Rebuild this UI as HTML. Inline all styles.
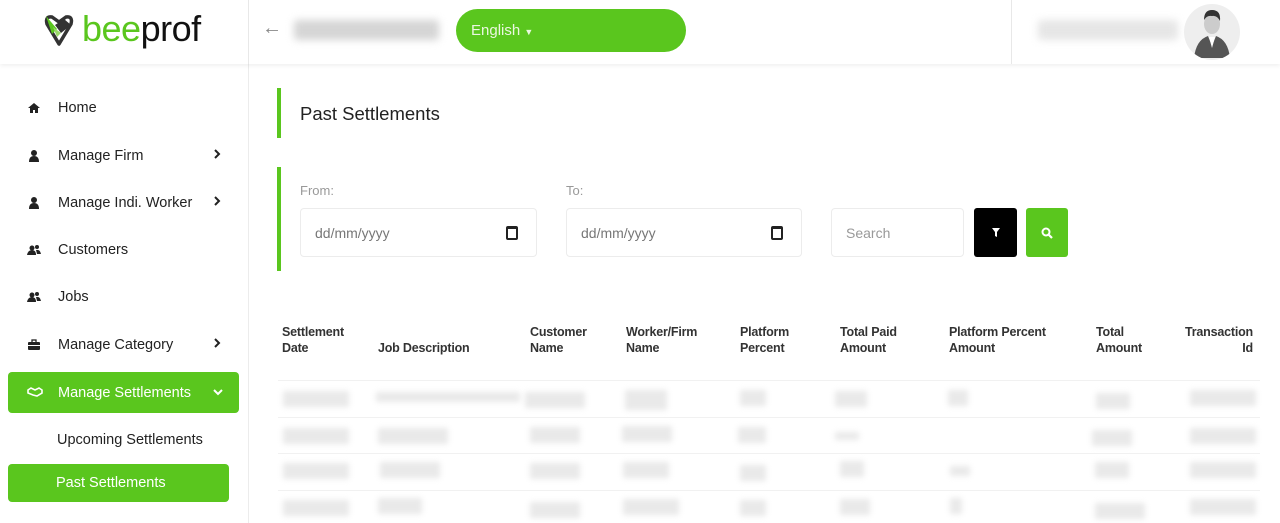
<!DOCTYPE html>
<html><head><meta charset="utf-8"><style>
*{box-sizing:border-box;margin:0;padding:0}
body{width:1280px;height:523px;overflow:hidden;background:#fff;font-family:"Liberation Sans",sans-serif;position:relative;color:#222}
.hdr{position:absolute;left:0;top:0;width:1280px;height:64px;background:#fff;box-shadow:0 2px 4px rgba(0,0,0,.06);z-index:2}
.vline{position:absolute;top:0;width:1px;background:#e8e8e8}
.blur{position:absolute;background:#e2e2e2;filter:blur(4px);border-radius:3px}
.side{position:absolute;left:0;top:64px;width:249px;height:459px;border-right:1px solid #ececec}
.nav{position:absolute;left:8px;width:231px;height:40px;font-size:14.5px;color:#222;display:flex;align-items:center}
.nav .ic{position:absolute;left:19px;top:13px;width:14px;height:14px}
.nav .tx{position:absolute;left:50px}
.nav .ar{position:absolute;left:205px;top:13px}
.act{background:#5ac61e;color:#fff;border-radius:4px}
.lbl{position:absolute;font-size:13px;color:#999}
.inp{position:absolute;top:208px;height:49px;border:1px solid #ececec;border-radius:4px;font-size:14px;color:#777;padding:0 14px;display:flex;align-items:center}
.th{position:absolute;top:324px;font-size:12.5px;font-weight:bold;color:#333;line-height:16px;letter-spacing:-.2px}
.rl{position:absolute;left:278px;width:982px;height:1px;background:#f1f1f1}
.b{position:absolute;height:16px;background:#e9e9e9;filter:blur(3px)}
</style></head><body>
<div class="hdr">
  <div style="position:absolute;left:42px;top:12px;width:34px;height:36px">
    <svg width="34" height="36" viewBox="0 0 34 36"><path d="M5 12 Q3 4 10 5 L17 10 L24 5 Q31 4 29 12 L17 32 Z" fill="none" stroke="#333" stroke-width="3.5" stroke-linejoin="round"/><path d="M4 4 L15 17 L10 22 Z" fill="#5ac61e"/><path d="M13 13 L22 7 L29 13 L19 21 Z" fill="#333"/><path d="M11 15 L19 21 L15 25 Z" fill="#9ad86a"/></svg>
  </div>
  <div style="position:absolute;left:82px;top:7px;font-size:36px;letter-spacing:-0.5px;line-height:44px"><span style="color:#5ac61e">bee</span><span style="color:#111">prof</span></div>
  <div class="vline" style="left:248px;height:64px"></div>
  <div style="position:absolute;left:262px;top:17px;font-size:20px;color:#888">←</div>
  <div class="blur" style="left:294px;top:20px;width:145px;height:20px;background:#d5d5d5"></div>
  <div style="position:absolute;left:456px;top:9px;width:230px;height:43px;background:#5ac61e;border-radius:22px;color:#eaf7e0;font-size:15px;padding-left:15px;line-height:43px">English <span style="font-size:9px">▼</span></div>
  <div class="vline" style="left:1011px;height:64px"></div>
  <div class="blur" style="left:1038px;top:20px;width:140px;height:20px;background:#e6e6e6"></div>
  <div style="position:absolute;left:1184px;top:4px;width:56px;height:56px;border-radius:50%;background:#eee;overflow:hidden">
    <svg width="56" height="56" viewBox="0 0 56 56"><ellipse cx="28" cy="20" rx="8" ry="10" fill="#ccc"/><path d="M20 16 Q20 6 28 6 Q37 6 36 17 Q33 11 28 12 Q23 11 20 16Z" fill="#333"/><path d="M10 54 Q12 36 24 32 L28 42 L32 32 Q44 36 46 54Z" fill="#555"/><path d="M25 33 L28 44 L31 33Z" fill="#fff"/></svg>
  </div>
</div>
<div class="side">
  <div class="nav" style="top:24px"><svg class="ic" viewBox="0 0 14 14"><path d="M1 7 L7 2 L13 7 L11 7 L11 12 L8 12 L8 9 L6 9 L6 12 L3 12 L3 7Z" fill="#222"/></svg><span class="tx">Home</span></div>
  <div class="nav" style="top:72px"><svg class="ic" viewBox="0 0 14 14"><circle cx="7" cy="4" r="3" fill="#222"/><path d="M2 13 Q2 7 7 7 Q12 7 12 13Z" fill="#222"/></svg><span class="tx">Manage Firm</span><svg class="ar" width="8" height="10" viewBox="0 0 8 10"><path d="M2 1 L6 5 L2 9" stroke="#222" stroke-width="2" fill="none"/></svg></div>
  <div class="nav" style="top:119px"><svg class="ic" viewBox="0 0 14 14"><circle cx="7" cy="4" r="3" fill="#222"/><path d="M2 13 Q2 7 7 7 Q12 7 12 13Z" fill="#222"/></svg><span class="tx">Manage Indi. Worker</span><svg class="ar" width="8" height="10" viewBox="0 0 8 10"><path d="M2 1 L6 5 L2 9" stroke="#222" stroke-width="2" fill="none"/></svg></div>
  <div class="nav" style="top:166px"><svg class="ic" viewBox="0 0 14 14"><circle cx="5" cy="5" r="2.5" fill="#222"/><path d="M0 12 Q1 7 5 7 Q9 7 9 12Z" fill="#222"/><circle cx="10" cy="4" r="2" fill="#222"/><path d="M9 7 Q13 6 14 11 L10 11Z" fill="#222"/></svg><span class="tx">Customers</span></div>
  <div class="nav" style="top:213px"><svg class="ic" viewBox="0 0 14 14"><circle cx="5" cy="5" r="2.5" fill="#222"/><path d="M0 12 Q1 7 5 7 Q9 7 9 12Z" fill="#222"/><circle cx="10" cy="4" r="2" fill="#222"/><path d="M9 7 Q13 6 14 11 L10 11Z" fill="#222"/></svg><span class="tx">Jobs</span></div>
  <div class="nav" style="top:261px"><svg class="ic" viewBox="0 0 14 14"><rect x="1" y="4" width="12" height="8" rx="1" fill="#222"/><rect x="5" y="2" width="4" height="3" fill="none" stroke="#222" stroke-width="1.3"/><rect x="1" y="7" width="12" height="1" fill="#fff"/></svg><span class="tx">Manage Category</span><svg class="ar" width="8" height="10" viewBox="0 0 8 10"><path d="M2 1 L6 5 L2 9" stroke="#222" stroke-width="2" fill="none"/></svg></div>
  <div class="nav act" style="top:308px;height:41px;color:#fff"><svg class="ic" viewBox="0 0 16 14" style="width:16px"><path d="M1 5 L4 3 L8 5 L12 3 L15 5 L15 8 L10 11 L6 10 L1 8Z" fill="none" stroke="#fff" stroke-width="1.6"/></svg><span class="tx">Manage Settlements</span><svg class="ar" width="10" height="8" viewBox="0 0 10 8" style="top:16px"><path d="M1 2 L5 6 L9 2" stroke="#fff" stroke-width="2" fill="none"/></svg></div>
  <div style="position:absolute;left:57px;top:368px;font-size:14.5px;color:#222">Upcoming Settlements</div>
  <div style="position:absolute;left:8px;top:400px;width:221px;height:38px;background:#5ac61e;border-radius:4px;color:#fff;font-size:14.5px;line-height:38px;padding-left:48px">Past Settlements</div>
</div>
<div style="position:absolute;left:277px;top:88px;width:4px;height:50px;background:#5ac61e"></div>
<div style="position:absolute;left:300px;top:103px;font-size:18.5px;color:#222">Past Settlements</div>
<div style="position:absolute;left:277px;top:167px;width:4px;height:104px;background:#5ac61e"></div>
<div class="lbl" style="left:300px;top:183px">From:</div>
<div class="lbl" style="left:566px;top:183px">To:</div>
<div class="inp" style="left:300px;width:237px">dd/mm/yyyy<span style="position:absolute;right:18px;top:17px;width:12px;height:14px;border:2px solid #222;border-top-width:3px;border-radius:2px"></span></div>
<div class="inp" style="left:566px;width:236px">dd/mm/yyyy<span style="position:absolute;right:18px;top:17px;width:12px;height:14px;border:2px solid #222;border-top-width:3px;border-radius:2px"></span></div>
<div class="inp" style="left:831px;width:133px;color:#999">Search</div>
<div style="position:absolute;left:974px;top:208px;width:43px;height:49px;background:#000;border-radius:3px"><svg style="position:absolute;left:18px;top:20px" width="8" height="9" viewBox="0 0 8 9"><path d="M0 0 L8 0 L5 4 L5 9 L3 8 L3 4Z" fill="#fff"/></svg></div>
<div style="position:absolute;left:1026px;top:208px;width:42px;height:49px;background:#5ac61e;border-radius:3px"><svg style="position:absolute;left:15px;top:19px" width="12" height="12" viewBox="0 0 12 12"><circle cx="5" cy="5" r="3.5" stroke="#fff" stroke-width="2" fill="none"/><path d="M7.5 7.5 L11 11" stroke="#fff" stroke-width="2.2"/></svg></div>
<div class="th" style="left:282px">Settlement<br>Date</div>
<div class="th" style="left:378px;top:340px">Job Description</div>
<div class="th" style="left:530px">Customer<br>Name</div>
<div class="th" style="left:626px">Worker/Firm<br>Name</div>
<div class="th" style="left:740px">Platform<br>Percent</div>
<div class="th" style="left:840px">Total Paid<br>Amount</div>
<div class="th" style="left:949px">Platform Percent<br>Amount</div>
<div class="th" style="left:1096px">Total<br>Amount</div>
<div class="th" style="left:1185px;text-align:right">Transaction<br>Id</div>
<div class="rl" style="top:380px"></div><div class="rl" style="top:417px"></div><div class="rl" style="top:453px"></div><div class="rl" style="top:490px"></div>
<div class="b" style="left:283px;top:391px;width:66px"></div><div class="b" style="left:376px;top:392px;width:144px;height:10px"></div><div class="b" style="left:525px;top:392px;width:60px"></div><div class="b" style="left:625px;top:390px;width:42px;height:20px"></div><div class="b" style="left:740px;top:390px;width:26px"></div><div class="b" style="left:835px;top:391px;width:32px"></div><div class="b" style="left:948px;top:390px;width:20px"></div><div class="b" style="left:1096px;top:393px;width:34px"></div><div class="b" style="left:1190px;top:390px;width:66px"></div>
<div class="b" style="left:283px;top:428px;width:66px"></div><div class="b" style="left:378px;top:428px;width:70px"></div><div class="b" style="left:530px;top:427px;width:50px"></div><div class="b" style="left:622px;top:426px;width:50px"></div><div class="b" style="left:738px;top:427px;width:28px"></div><div class="b" style="left:835px;top:432px;width:24px;height:8px"></div><div class="b" style="left:1092px;top:430px;width:40px"></div><div class="b" style="left:1190px;top:428px;width:66px"></div>
<div class="b" style="left:283px;top:463px;width:66px"></div><div class="b" style="left:380px;top:462px;width:60px"></div><div class="b" style="left:530px;top:463px;width:50px"></div><div class="b" style="left:623px;top:462px;width:46px"></div><div class="b" style="left:740px;top:465px;width:26px"></div><div class="b" style="left:840px;top:461px;width:24px"></div><div class="b" style="left:950px;top:466px;width:20px;height:10px"></div><div class="b" style="left:1095px;top:462px;width:34px"></div><div class="b" style="left:1190px;top:462px;width:66px"></div>
<div class="b" style="left:283px;top:500px;width:66px"></div><div class="b" style="left:378px;top:498px;width:44px"></div><div class="b" style="left:530px;top:502px;width:50px"></div><div class="b" style="left:623px;top:499px;width:56px"></div><div class="b" style="left:740px;top:500px;width:26px"></div><div class="b" style="left:840px;top:499px;width:30px"></div><div class="b" style="left:950px;top:498px;width:12px"></div><div class="b" style="left:1095px;top:503px;width:50px"></div><div class="b" style="left:1190px;top:499px;width:66px"></div>
</body></html>
